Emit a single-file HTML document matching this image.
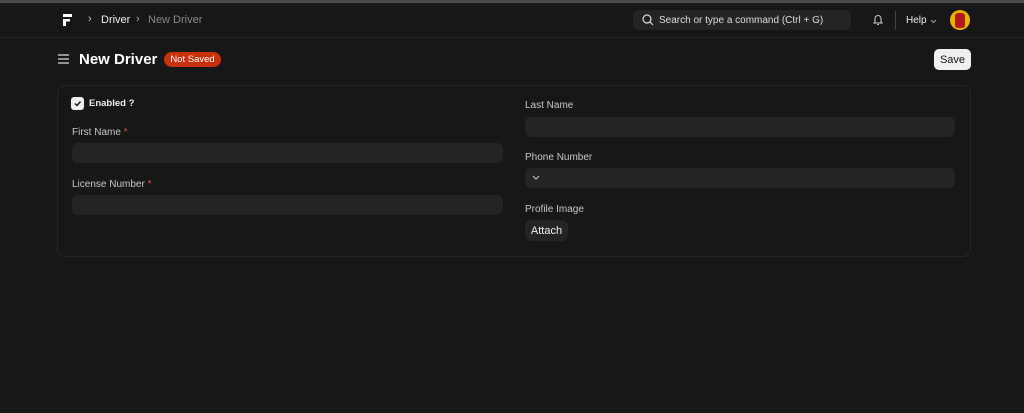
<!DOCTYPE html>
<html><head><meta charset="utf-8"><style>
*{box-sizing:border-box;margin:0;padding:0}
body{width:1024px;height:413px;background:#171717;font-family:"Liberation Sans",sans-serif;color:#e6e6e6;position:relative;overflow:hidden}
.top{position:absolute;left:0;top:0;width:1024px;height:3px;background:#4a4a4a}
.nav{position:absolute;left:0;top:3px;width:1024px;height:35px;border-bottom:1px solid #262626}
.abs{position:absolute}
.lbl{position:absolute;font-size:10px;color:#c8c8c8}
.inp{position:absolute;height:20px;background:#242424;border-radius:6px}
.req{color:#e0564b}
</style></head><body>
<div class="top"></div>
<div class="nav">
 <svg class="abs" style="left:63px;top:11px" width="10" height="12" viewBox="0 0 10 12"><rect x="0" y="0" width="9" height="3" fill="#fff"/><rect x="0" y="5" width="7" height="2.5" fill="#fff"/><rect x="0" y="5" width="3" height="7" fill="#fff"/></svg>
 <div class="abs" style="left:88px;top:10px;font-size:11px;color:#ccc">›</div>
 <div class="abs" style="left:101px;top:11px;font-size:11px;color:#f0f0f0">Driver</div>
 <div class="abs" style="left:136px;top:10px;font-size:11px;color:#aaa">›</div>
 <div class="abs" style="left:148px;top:11px;font-size:11px;color:#888">New Driver</div>
 <div class="abs" style="left:633px;top:7px;width:218px;height:20px;background:#242424;border-radius:6px"></div>
 <svg class="abs" style="left:642px;top:11px" width="12" height="12" viewBox="0 0 12 12"><circle cx="5" cy="5" r="4" fill="none" stroke="#ddd" stroke-width="1.2"/><path d="M8 8l3 3" stroke="#ddd" stroke-width="1.2"/></svg>
 <div class="abs" style="left:659px;top:12px;font-size:10px;color:#ddd">Search or type a command (Ctrl + G)</div>
 <svg class="abs" style="left:872px;top:10px" width="12" height="13" viewBox="0 0 12 13"><path d="M3 9V5.5a3 3 0 016 0V9l1 1H2z" fill="none" stroke="#ccc" stroke-width="1"/><path d="M5 11.5h2" stroke="#ccc"/></svg>
 <div class="abs" style="left:895px;top:8px;width:1px;height:19px;background:#444"></div>
 <div class="abs" style="left:906px;top:12px;font-size:10px;color:#eee">Help</div>
 <svg class="abs" style="left:930px;top:16px" width="7" height="5" viewBox="0 0 7 5"><path d="M1 1l2.5 2.5L6 1" fill="none" stroke="#aaa"/></svg>
 <div class="abs" style="left:950px;top:7px;width:20px;height:20px;border-radius:50%;background:#e8b400;overflow:hidden"><div style="margin:3px 0 0 5px;width:10px;height:15px;background:#b01818;border-radius:3px"></div></div>
</div>
<svg class="abs" style="left:58px;top:54px" width="11" height="10" viewBox="0 0 11 10"><path d="M0 1h11M0 5h11M0 9h11" stroke="#ddd" stroke-width="1.3"/></svg>
<div class="abs" style="left:79px;top:51px;font-size:15px;font-weight:bold;color:#fff">New Driver</div>
<div class="abs" style="left:164px;top:52px;width:57px;height:15px;border-radius:8px;background:#c9300c;color:#fff;font-size:9.5px;text-align:center;line-height:16px">Not Saved</div>
<div class="abs" style="left:934px;top:49px;width:37px;height:21px;border-radius:5px;background:#f0f0f0;color:#111;font-size:11px;text-align:center;line-height:22px">Save</div>
<div class="abs" style="left:57px;top:85px;width:914px;height:172px;border:1px solid #262626;border-radius:8px"></div>
<div class="abs" style="left:71px;top:97px;width:13px;height:13px;border-radius:3px;background:#f0f0f0"></div>
<svg class="abs" style="left:73px;top:99px" width="9" height="9" viewBox="0 0 9 9"><path d="M2 4.5l2 2L7.5 2.5" fill="none" stroke="#111" stroke-width="1.4"/></svg>
<div class="abs" style="left:89px;top:98px;font-size:9.5px;font-weight:bold;color:#eee">Enabled ?</div>
<div class="lbl" style="left:72px;top:127px">First Name <span class="req">*</span></div>
<div class="inp" style="left:72px;top:143px;width:431px"></div>
<div class="lbl" style="left:72px;top:179px">License Number <span class="req">*</span></div>
<div class="inp" style="left:72px;top:195px;width:431px"></div>
<div class="lbl" style="left:525px;top:100px">Last Name</div>
<div class="inp" style="left:525px;top:117px;width:430px"></div>
<div class="lbl" style="left:525px;top:152px">Phone Number</div>
<div class="inp" style="left:525px;top:168px;width:430px"></div>
<svg class="abs" style="left:532px;top:175px" width="8" height="5" viewBox="0 0 8 5"><path d="M1 1l3 3 3-3" fill="none" stroke="#ccc"/></svg>
<div class="lbl" style="left:525px;top:204px">Profile Image</div>
<div class="abs" style="left:525px;top:220px;width:43px;height:21px;border-radius:6px;background:#242424;color:#f0f0f0;font-size:11px;text-align:center;line-height:23px">Attach</div>
</body></html>
